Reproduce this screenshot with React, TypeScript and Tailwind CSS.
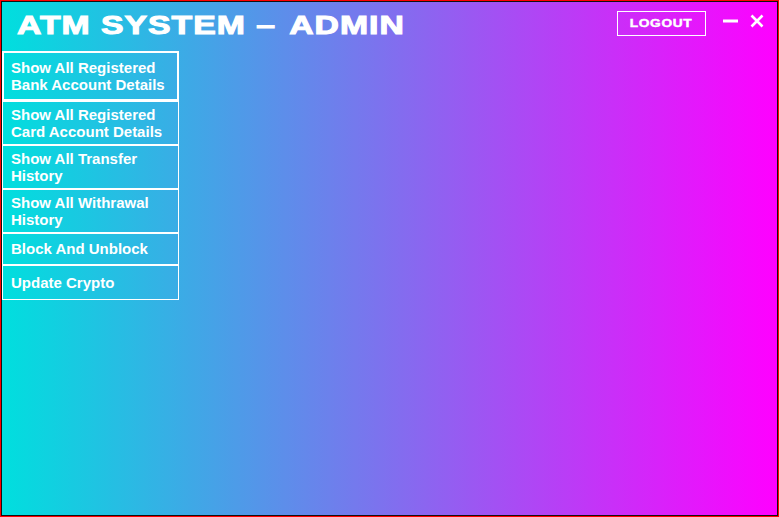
const menuItems = [
  { label: ['Show All Registered', 'Bank Account Details'], box: 'h-[50px] border-2 pl-[7px]' },
  { label: ['Show All Registered', 'Card Account Details'], box: 'h-[44px] border pl-[8px]' },
  { label: ['Show All Transfer', 'History'], box: 'h-[44px] border pl-[8px]' },
  { label: ['Show All Withrawal', 'History'], box: 'h-[44px] border pl-[8px]' },
  { label: ['Block And Unblock'], box: 'h-[32px] border pl-[8px] pb-px' },
  { label: ['Update Crypto'], box: 'h-[35px] border pl-[8px]' },
];

export default function App() {
  return (
    <div className="h-[517px] w-[779px] overflow-hidden bg-[#ff0000] p-px">
      <div className="h-full w-full border border-[#111] bg-linear-to-r/srgb from-[#00dfde] to-[#ff00ff]">
        <header className="flex h-[49px] items-start justify-between">
          <h1 className="ml-[15px] mt-[8px] origin-left scale-x-[1.35] whitespace-nowrap font-['Liberation_Sans',sans-serif] text-[25px] font-bold leading-[30px] tracking-[0.75px] text-white [-webkit-text-stroke:1px_white]">
            ATM SYSTEM – <span className="ml-[2px]">ADMIN</span>
          </h1>
          <div className="mr-[13px] mt-[9px] flex items-start">
            <button
              type="button"
              className="flex h-[25px] w-[89px] items-center justify-center border border-white font-['Liberation_Sans',sans-serif] text-[11px] font-bold tracking-[0.5px] text-white"
            >
              <span className="scale-x-[1.25] [-webkit-text-stroke:0.4px_white]">LOGOUT</span>
            </button>
            <svg width="15" height="4" viewBox="0 0 15 4" className="ml-[17px] mt-[8px]">
              <rect width="15" height="3" y="0.5" fill="#fff" />
            </svg>
            <svg width="14" height="14" viewBox="0 0 14 14" className="ml-[12px] mt-[3px]">
              <path d="M1.5 1.5 12.5 12.5M12.5 1.5 1.5 12.5" stroke="#fff" strokeWidth="2.6" />
            </svg>
          </div>
        </header>
        <nav className="flex w-[177px] flex-col">
          {menuItems.map((item, i) => (
            <button
              key={i}
              type="button"
              className={`${item.box} border-white text-left font-['Liberation_Sans',sans-serif] text-[15px] font-bold leading-[17px] text-white`}
            >
              {item.label.map((line) => (
                <span key={line} className="block whitespace-nowrap">
                  {line}
                </span>
              ))}
            </button>
          ))}
        </nav>
      </div>
    </div>
  );
}
